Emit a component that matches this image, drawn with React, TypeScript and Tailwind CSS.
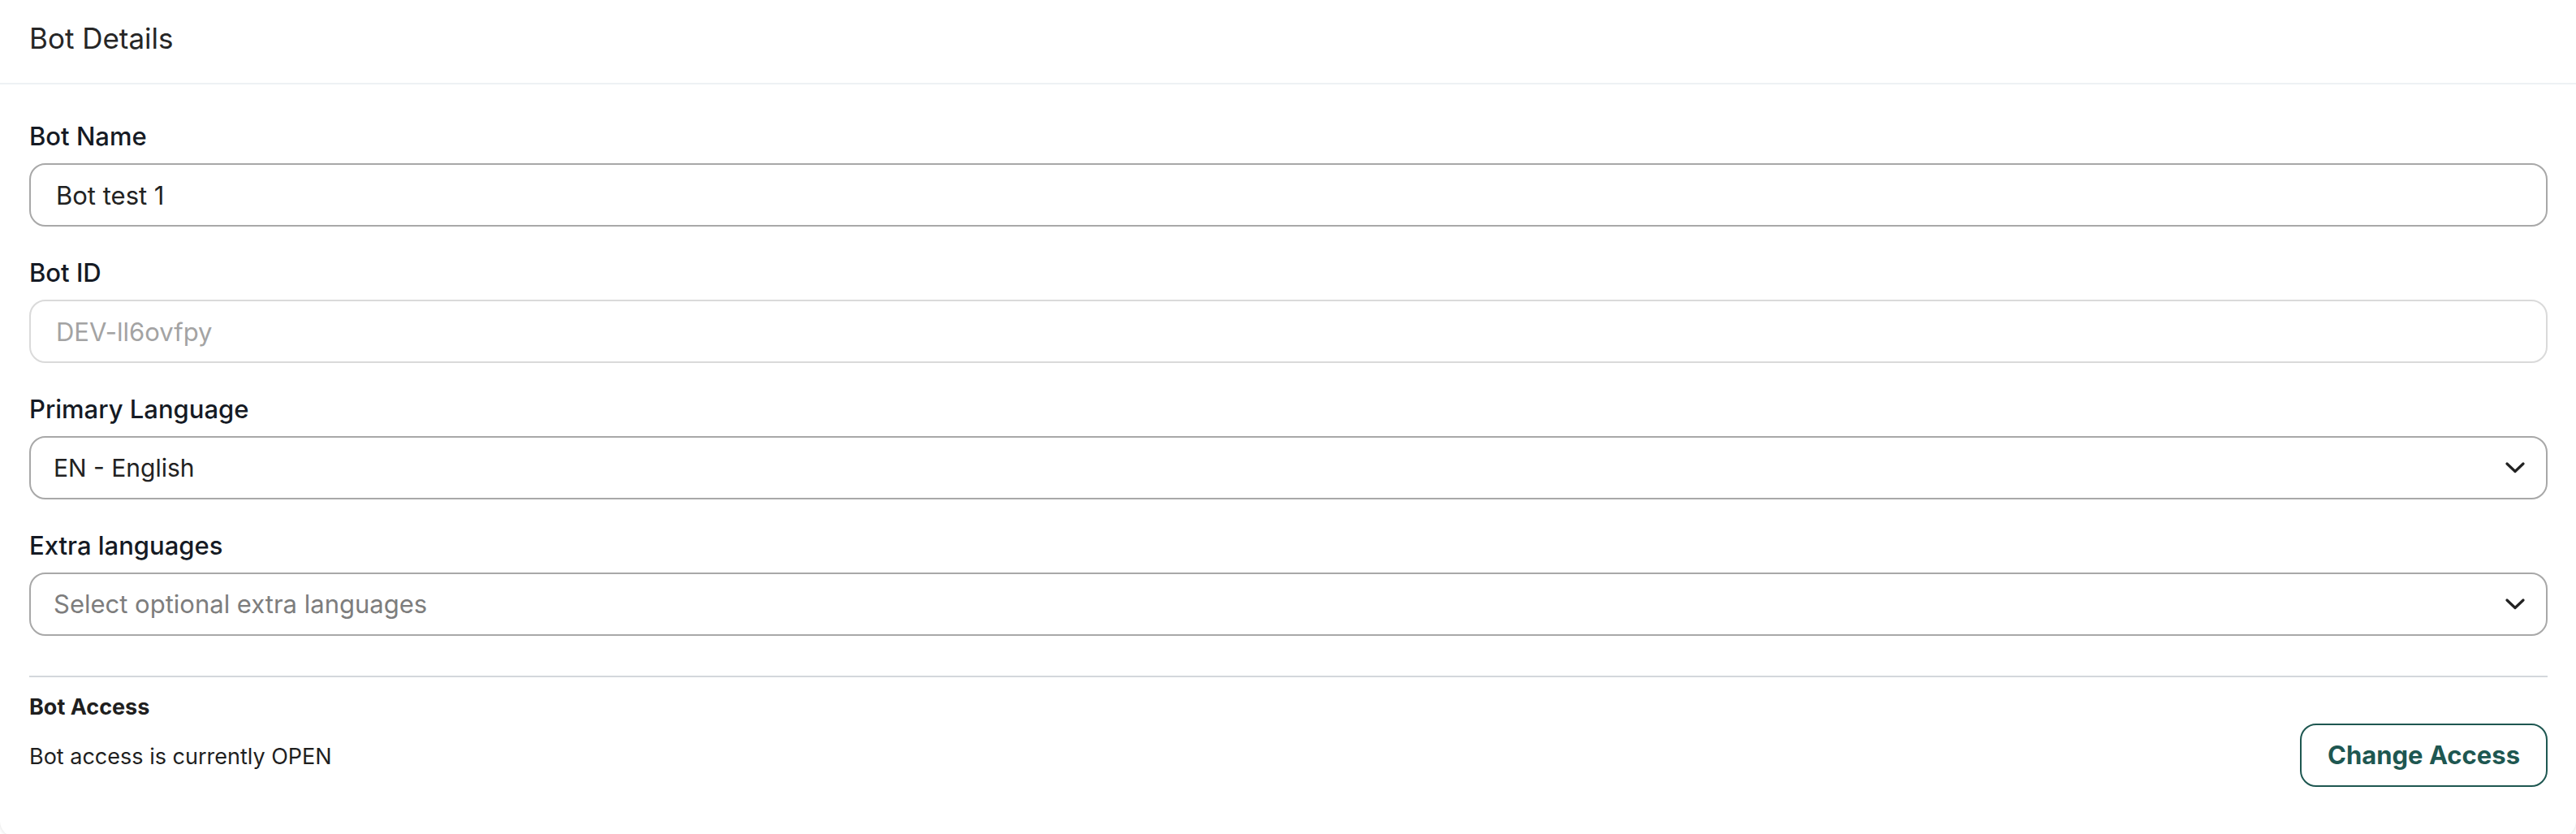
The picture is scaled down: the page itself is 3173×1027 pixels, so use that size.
import React from 'react';

const Chevron: React.FC = () => (
  <svg width="24" height="14" viewBox="0 0 24 14" fill="none" className="shrink-0">
    <path d="M2 2l10 9.5L22 2" stroke="#222222" strokeWidth="3.2" strokeLinecap="round" strokeLinejoin="round" />
  </svg>
);

const Label: React.FC<{ text: string }> = ({ text }) => (
  <label className="block text-[31px] leading-[38px] font-medium text-[#151a24] mb-[14px]">{text}</label>
);

const SelectBox: React.FC<{ value: string; placeholder?: boolean }> = ({ value, placeholder }) => (
  <div className="flex items-center justify-between h-[78px] rounded-[20px] border-2 border-[#a8a8a8] bg-white pl-[28px] pr-[26px] cursor-pointer">
    <span className={placeholder ? 'text-[31px] text-[#7d7d7d]' : 'text-[30px] text-[#222222]'}>{value}</span>
    <Chevron />
  </div>
);

const App: React.FC = () => {
  return (
    <div className="min-h-screen bg-white [font-family:Inter,sans-serif]">
      <div className="bg-white rounded-b-[20px] shadow-[0_0_5px_rgba(0,0,0,0.14)] pb-[62px]">
        <div className="h-[104px] pt-[26px] px-[36px] border-b-2 border-[#eef1f4]">
          <h2 className="text-[35px] leading-[42px] font-normal text-[#262626]">Bot Details</h2>
        </div>

        <div className="pl-[36px] pr-[35px] pt-[45px]">
          <div>
            <Label text="Bot Name" />
            <input
              type="text"
              value="Bot test 1"
              readOnly
              className="w-full h-[78px] rounded-[20px] border-2 border-[#a8a8a8] px-[31px] text-[31px] text-[#222222] outline-none"
            />
          </div>

          <div className="mt-[38px]">
            <Label text="Bot ID" />
            <input
              type="text"
              value="DEV-ll6ovfpy"
              disabled
              className="w-full h-[78px] rounded-[20px] border-2 border-[#dadada] bg-white px-[31px] text-[31px] text-[#a3a3a3] outline-none"
            />
          </div>

          <div className="mt-[38px]">
            <Label text="Primary Language" />
            <SelectBox value="EN - English" />
          </div>

          <div className="mt-[38px]">
            <Label text="Extra languages" />
            <SelectBox value="Select optional extra languages" placeholder />
          </div>

          <div className="mt-[49px] border-t-2 border-[#d4d7dc]" />

          <div className="flex justify-between pt-[22px]">
            <div>
              <h3 className="text-[27px] leading-[30px] font-bold text-[#1f1f1f]">Bot Access</h3>
              <p className="mt-[30px] text-[27px] leading-[32px] text-[#1f1f1f]">Bot access is currently OPEN</p>
            </div>
            <button
              type="button"
              className="mt-[35px] h-[78px] w-[305px] rounded-[20px] border-2 border-[#1e5751] bg-white text-[31px] font-bold text-[#1e5751]"
            >
              Change Access
            </button>
          </div>
        </div>
      </div>
    </div>
  );
};

export default App;
